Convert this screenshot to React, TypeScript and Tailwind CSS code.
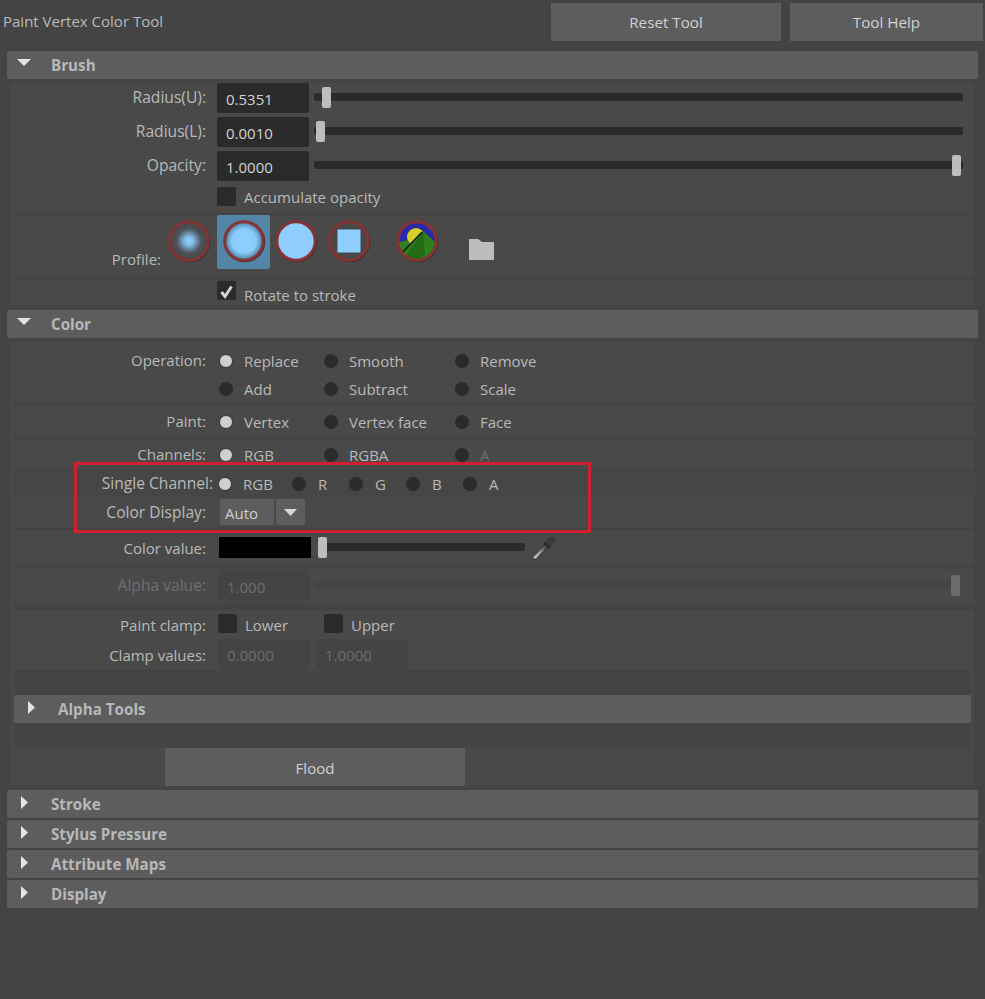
import React from "react";

const Tri = ({ open }: { open: boolean }) =>
  open ? (
    <svg width="14" height="7" viewBox="0 0 14 7" className="absolute left-[10px] top-[8px]">
      <path d="M0 0H14L7 7Z" fill="#e4e4e4" />
    </svg>
  ) : (
    <svg width="7" height="13" viewBox="0 0 7 13" className="absolute left-[14px] top-[6px]">
      <path d="M0 0L7 6.5L0 13Z" fill="#e4e4e4" />
    </svg>
  );

const Header = ({ title, open = false, cls = "mx-[7px] mr-[7px]" }: { title: string; open?: boolean; cls?: string }) => (
  <div className={`relative h-[28px] rounded-[2px] bg-[#5d5d5d] flex items-center pl-[44px] text-[15.2px] font-bold text-[#b8b8b8] ${cls}`}>
    <Tri open={open} />
    <span className="relative top-[1px]">{title}</span>
  </div>
);

const Label = ({ children, w = 193, dim = false, wide = false }: { children: React.ReactNode; w?: number; dim?: boolean; wide?: boolean }) => (
  <div
    style={{ width: w }}
    className={`relative top-[-1px] shrink-0 text-right whitespace-nowrap ${wide ? "text-[15.6px]" : "text-[15px]"} ${dim ? "text-[#6f6f6f]" : "text-[#b9b9b9]"}`}
  >
    {children}
  </div>
);

const Input = ({ v, off = false }: { v: string; off?: boolean }) => (
  <div
    className={`w-[92px] h-[30px] shrink-0 rounded-[2px] pl-[9px] flex items-center ${
      off ? "bg-[#444444] text-[#6c6c6c]" : "bg-[#2b2b2b] text-[#d2d2d2]"
    }`}
  >
    <span className="relative top-[1px]">{v}</span>
  </div>
);

const Slider = ({ w, at, off = false }: { w: number; at: number; off?: boolean }) => (
  <div className="relative" style={{ width: w, height: 21 }}>
    <div className={`absolute left-0 right-0 top-[6px] h-[8px] rounded-[2px] ${off ? "bg-[#444444]" : "bg-[#2b2b2b]"}`} />
    <div
      className={`absolute top-0 w-[9px] h-[21px] rounded-[2px] ${off ? "bg-[#6b6b6b]" : "bg-[#bdbdbd]"}`}
      style={{ left: at }}
    />
  </div>
);

const Check = ({ on = false }: { on?: boolean }) => (
  <div className="relative w-[19px] h-[19px] shrink-0 rounded-[2px] bg-[#2b2b2b]">
    {on && (
      <svg viewBox="0 0 19 19" className="absolute inset-0 w-[19px] h-[19px]">
        <path d="M4.5 11L8 15.5L14.5 5.5" stroke="#d4d4d4" strokeWidth="3" fill="none" />
      </svg>
    )}
  </div>
);

const Radio = ({ on = false }: { on?: boolean }) => (
  <div className={`w-[14px] h-[14px] shrink-0 rounded-full ${on ? "bg-[#cfcfcf] border-[1.5px] border-[#333333]" : "bg-[#2b2b2b]"}`} />
);

const Opt = ({ t, w, on = false, dim = false, gap = 11 }: { t: string; w: number; on?: boolean; dim?: boolean; gap?: number }) => (
  <div className="flex items-center shrink-0" style={{ width: w }}>
    <div className="relative top-[-1px]"><Radio on={on} /></div>
    <span style={{ marginLeft: gap }} className={`whitespace-nowrap ${dim ? "text-[#6f6f6f]" : "text-[#b9b9b9]"}`}>
      {t}
    </span>
  </div>
);

const Ring = ({ id, children }: { id: string; children: React.ReactNode }) => (
  <svg width="44" height="44" viewBox="0 0 44 44" className="shrink-0">
    <defs>
      <clipPath id={id}>
        <circle cx="22" cy="22" r="19" />
      </clipPath>
    </defs>
    <circle cx="22.7" cy="22.7" r="20.6" fill="#323232" />
    <circle cx="22" cy="22" r="19" fill="#484848" />
    <g clipPath={`url(#${id})`}>{children}</g>
    <circle cx="22" cy="22" r="19.2" fill="none" stroke="#853335" strokeWidth="3" />
  </svg>
);

const Profiles = () => (
  <div className="flex items-start h-[62px]">
    <Label w={148}><span className="relative top-[38px]">Profile:</span></Label>
    <div className="ml-[6px] mt-[4px] shrink-0"><Ring id="p1">
      <defs>
        <radialGradient id="g1">
          <stop offset="0" stopColor="#8fd0ff" />
          <stop offset="0.2" stopColor="#84c2ee" />
          <stop offset="0.65" stopColor="#4c5358" />
          <stop offset="1" stopColor="#464646" />
        </radialGradient>
      </defs>
      <circle cx="22" cy="22" r="19" fill="url(#g1)" />
    </Ring></div>
    <div className="ml-[6px] w-[53px] h-[54px] rounded-[2px] bg-[#5285a6] flex items-start justify-center pt-[4px] shrink-0">
      <Ring id="p2">
        <defs>
          <radialGradient id="g2">
            <stop offset="0" stopColor="#8fd0ff" />
            <stop offset="0.6" stopColor="#8accfb" />
            <stop offset="0.95" stopColor="#4d7fa2" />
          </radialGradient>
        </defs>
        <circle cx="22" cy="22" r="20" fill="url(#g2)" />
      </Ring>
    </div>
    <div className="ml-[4px] mt-[4px] shrink-0"><Ring id="p3"><circle cx="22" cy="22" r="20" fill="#8fcdff" /></Ring></div>
    <div className="ml-[9px] mt-[4px] shrink-0"><Ring id="p4"><rect x="10.5" y="10.5" width="23" height="23" fill="#8fcdff" /></Ring></div>
    <div className="ml-[24px] mt-[4px] shrink-0"><Ring id="p5">
      <rect width="44" height="44" fill="#2a2aa6" />
      <circle cx="21" cy="18" r="9" fill="#d9cf2a" />
      <path d="M2 24L12 21L20 30L8 44H2Z" fill="#2f7f1c" />
      <path d="M6 34L28 12L42 25V44H6Z" fill="#2f7f1c" />
      <path d="M10 38L28 12L30 36L20 44Z" fill="#226a14" />
      <path d="M5 36L27 13" stroke="#141414" strokeWidth="1.4" />
    </Ring></div>
    <svg width="25" height="21" viewBox="0 0 25 21" className="ml-[30px] mt-[24px] shrink-0">
      <path d="M0 0H9L13 3H25V21H0Z" fill="#bcbcbc" />
    </svg>
  </div>
);

const Dropper = () => (
  <svg width="25" height="25" viewBox="0 0 25 25" className="shrink-0">
    <defs>
      <linearGradient id="dg" x1="0" y1="1" x2="1" y2="0">
        <stop offset="0" stopColor="#d4d4d4" />
        <stop offset="0.5" stopColor="#8a8a8a" />
        <stop offset="1" stopColor="#2a2a2a" />
      </linearGradient>
    </defs>
    <path d="M1 22L13 9L16 12L4 24L1 24Z" fill="url(#dg)" stroke="#222" strokeWidth="0.8" />
    <path d="M15 4L21 1L24 4L21 10L18 11L14 7Z" fill="#3a3a3a" />
    <path d="M12 7L18 13" stroke="#2a2a2a" strokeWidth="2.4" />
  </svg>
);

const Gap = ({ h = 4 }: { h?: number }) => <div style={{ height: h }} className="bg-[#444444]" />;

export default function App() {
  return (
    <div
      className="relative w-[985px] h-[999px] overflow-hidden bg-[#444444] text-[15px] leading-none text-[#b9b9b9]"
      style={{ fontFamily: '"Open Sans", "Noto Sans", sans-serif' }}
    >
      {/* Top bar */}
      <div className="flex h-[51px] pt-[3px] pr-[2px]">
        <div className="flex-1 pl-[3px] pt-[11px] text-[#b9b9b9]">Paint Vertex Color Tool</div>
        <button className="w-[230px] h-[38px] pt-[2px] bg-[#5d5d5d] text-[15.2px] text-[#d2d2d2]">Reset Tool</button>
        <button className="ml-[9px] w-[193px] h-[38px] pt-[2px] bg-[#5d5d5d] text-[15.2px] text-[#d2d2d2]">Tool Help</button>
      </div>

      <Header title="Brush" open />

      {/* Brush panel */}
      <div className="mt-[4px] ml-[11px] w-[963px] bg-[#494949] pl-[2px]">
        <div className="h-[130px] flex flex-col">
          <div className="h-[34px] flex items-start">
            <Label wide><span className="relative top-[8px]">Radius(U):</span></Label>
            <div className="ml-[11px]"><Input v="0.5351" /></div>
            <div className="ml-[5px] mt-[4px]"><Slider w={649} at={8} /></div>
          </div>
          <div className="h-[34px] flex items-start">
            <Label wide><span className="relative top-[8px]">Radius(L):</span></Label>
            <div className="ml-[11px]"><Input v="0.0010" /></div>
            <div className="ml-[5px] mt-[4px]"><Slider w={649} at={2} /></div>
          </div>
          <div className="h-[36px] flex items-start">
            <Label wide><span className="relative top-[8px]">Opacity:</span></Label>
            <div className="ml-[11px]"><Input v="1.0000" /></div>
            <div className="ml-[5px] mt-[4px]"><Slider w={649} at={638} /></div>
          </div>
          <div className="flex items-center pl-[204px]">
            <Check />
            <span className="ml-[8px] relative top-[1px]">Accumulate opacity</span>
          </div>
        </div>
        <Gap h={2} />
        <Profiles />
        <Gap />
        <div className="h-[24px] flex items-start pl-[204px]">
          <Check on />
          <span className="ml-[8px] relative top-[7px]">Rotate to stroke</span>
        </div>
      </div>

      <div className="h-[5px]" />
      <Header title="Color" open />

      {/* Color panel */}
      <div className="mt-[4px] ml-[11px] w-[963px] bg-[#494949] pl-[2px]">
        <div className="h-[60px] pt-[12px]">
          <div className="h-[28px] flex items-start">
            <Label>Operation:</Label>
            <div className="ml-[13px] flex">
              <Opt t="Replace" w={105} on />
              <Opt t="Smooth" w={131} />
              <Opt t="Remove" w={100} />
            </div>
          </div>
          <div className="h-[20px] flex items-start">
            <div className="w-[193px]" />
            <div className="ml-[13px] flex">
              <Opt t="Add" w={105} />
              <Opt t="Subtract" w={131} />
              <Opt t="Scale" w={100} />
            </div>
          </div>
        </div>
        <Gap h={5} />
        <div className="h-[28px] pt-[8px] flex items-start">
          <Label>Paint:</Label>
          <div className="ml-[13px] flex">
            <Opt t="Vertex" w={105} on />
            <Opt t="Vertex face" w={131} />
            <Opt t="Face" w={100} />
          </div>
        </div>
        <Gap h={5} />
        <div className="h-[28px] pt-[8px] flex items-start">
          <Label>Channels:</Label>
          <div className="ml-[13px] flex">
            <Opt t="RGB" w={105} on />
            <Opt t="RGBA" w={131} />
            <Opt t="A" w={100} dim />
          </div>
        </div>
        <div className="h-[29px] pt-[9px] flex items-start bg-[#464646]">
          <Label w={200} wide>Single Channel:</Label>
          <div className="ml-[5px] flex">
            <Opt t="RGB" w={74} on />
            <Opt t="R" w={57} gap={12} />
            <Opt t="G" w={57} gap={12} />
            <Opt t="B" w={57} gap={12} />
            <Opt t="A" w={57} gap={12} />
          </div>
        </div>
        <div className="h-[30px] pt-[2px] flex items-start">
          <Label wide><span className="relative top-[7px]">Color Display:</span></Label>
          <div className="ml-[14px] flex">
            <div className="w-[54px] h-[26px] rounded-l-[2px] bg-[#5d5d5d] pl-[5px] pt-[2px] flex items-center text-[#cfcfcf]">Auto</div>
            <div className="ml-[2px] w-[29px] h-[26px] rounded-r-[2px] bg-[#5d5d5d] flex items-center justify-center">
              <svg width="13" height="7" viewBox="0 0 13 7"><path d="M0 0H13L6.5 7Z" fill="#d8d8d8" /></svg>
            </div>
          </div>
        </div>
        <Gap h={3} />
        <div className="h-[35px] pt-[7px] flex items-start">
          <Label><span className="relative top-[5px]">Color value:</span></Label>
          <div className="ml-[13px] w-[92px] h-[21px] bg-black shrink-0" />
          <div className="ml-[7px]"><Slider w={207} at={0} /></div>
          <div className="ml-[7px] mt-[-2px]"><Dropper /></div>
        </div>
        <Gap />
        <div className="h-[34px] pt-[2px] flex items-start">
          <Label dim wide><span className="relative top-[8px]">Alpha value:</span></Label>
          <div className="ml-[12px]"><Input v="1.000" off /></div>
          <div className="ml-[5px] mt-[4px]"><Slider w={645} at={636} off /></div>
        </div>
        <Gap h={7} />
        <div className="h-[60px]">
          <div className="h-[29px] pt-[4px] flex items-start">
            <Label><span className="relative top-[5px]">Paint clamp:</span></Label>
            <div className="ml-[12px] flex w-[106px]">
              <Check />
              <span className="ml-[8px] relative top-[4px]">Lower</span>
            </div>
            <div className="flex">
              <Check />
              <span className="ml-[8px] relative top-[4px]">Upper</span>
            </div>
          </div>
          <div className="h-[31px] flex items-start">
            <Label><span className="relative top-[10px]">Clamp values:</span></Label>
            <div className="ml-[12px]"><Input v="0.0000" off /></div>
            <div className="ml-[6px]"><Input v="1.0000" off /></div>
          </div>
        </div>
        <div className="ml-[1px] mr-[3px] bg-[#444444] h-[25px]" />
        <Header title="Alpha Tools" cls="ml-[1px] mr-[3px]" />
        <div className="ml-[1px] mr-[3px] bg-[#444444] h-[24px]" />
        <div className="h-[38px] pl-[152px]">
          <button className="w-[300px] h-[38px] mt-[1px] pt-[2px] bg-[#5d5d5d] rounded-[1px] text-[#d2d2d2]">Flood</button>
        </div>
      </div>

      <div className="h-[5px]" />
      <Header title="Stroke" />
      <div className="h-[2px]" />
      <Header title="Stylus Pressure" />
      <div className="h-[2px]" />
      <Header title="Attribute Maps" />
      <div className="h-[2px]" />
      <Header title="Display" />

      {/* Annotation */}
      <div className="absolute left-[74px] top-[462px] w-[517px] h-[71px] border-[3px] border-[#cf2030] pointer-events-none" />
    </div>
  );
}
